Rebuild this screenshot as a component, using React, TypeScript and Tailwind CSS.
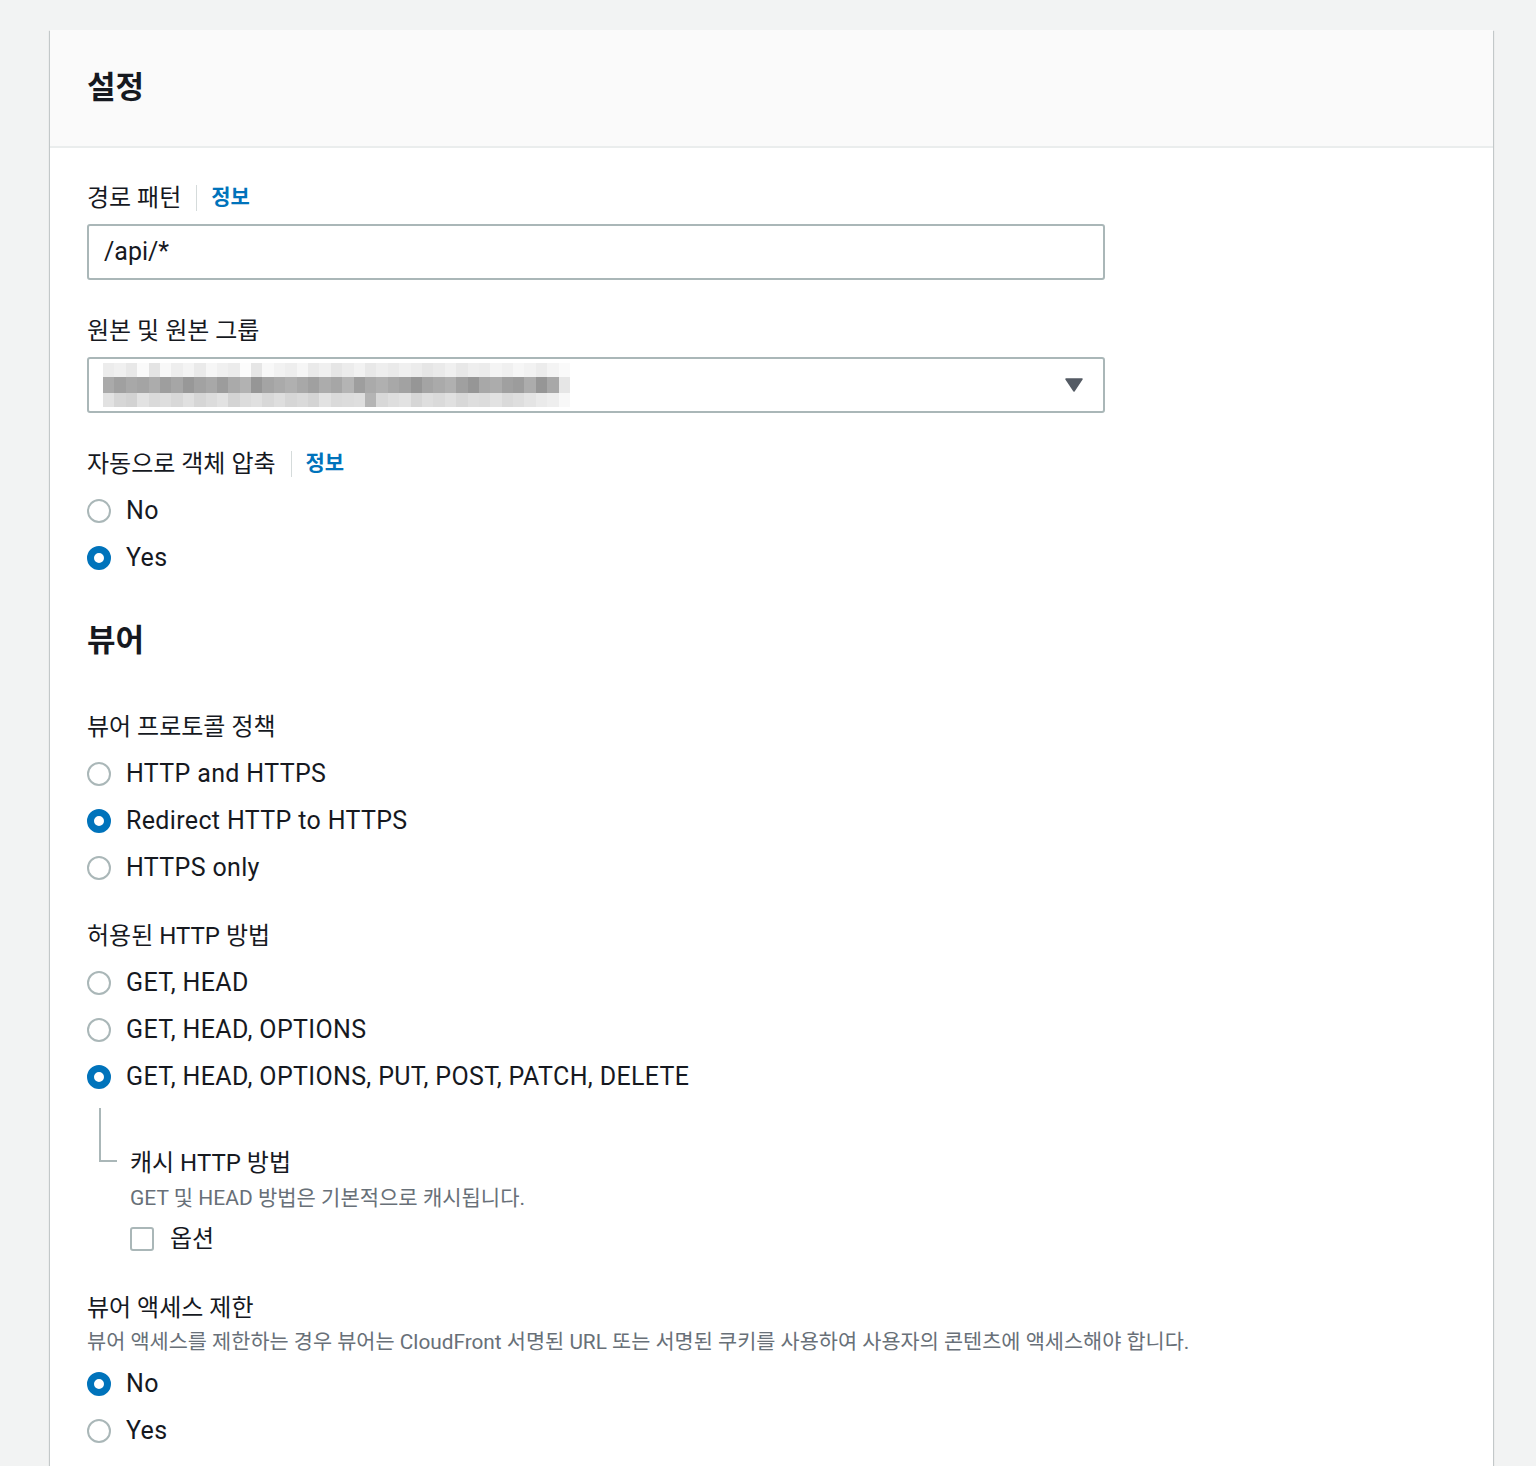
import React from "react";

const FONT = {
  fontFamily: '"Roboto", "Noto Sans CJK KR", sans-serif',
};

// pixelated placeholder rows for the selected origin value
const BLUR_ROWS: number[][] = [
  [236, 240, 232, 250, 228, 248, 238, 244, 234, 246, 240, 236, 252, 230, 248, 242, 238, 246, 234, 240, 230, 236, 242, 232, 238, 234, 240, 236, 230, 234, 240, 232, 238, 236, 244, 240, 246, 242, 236, 244, 250],
  [170, 160, 168, 164, 172, 158, 166, 152, 162, 168, 156, 170, 178, 150, 164, 170, 176, 168, 160, 172, 166, 180, 158, 170, 176, 168, 162, 150, 164, 170, 176, 160, 150, 168, 172, 160, 156, 172, 150, 168, 230],
  [226, 214, 210, 226, 218, 222, 216, 224, 214, 220, 226, 212, 220, 224, 216, 222, 214, 218, 212, 226, 218, 220, 222, 180, 216, 222, 226, 214, 222, 218, 224, 216, 222, 220, 226, 218, 222, 228, 234, 238, 248],
];

function Radio({ label, checked }: { label: string; checked?: boolean }) {
  return (
    <div className="flex h-[47px] items-center">
      {checked ? (
        <span className="box-border h-6 w-6 shrink-0 rounded-full border-[7px] border-[#0073bb] bg-white" />
      ) : (
        <span className="box-border h-6 w-6 shrink-0 rounded-full border-2 border-[#aab7b8] bg-white" />
      )}
      <span className="ml-[15px] text-[25px] tracking-[0.35px] text-[#16191f]">{label}</span>
    </div>
  );
}

function FieldLabel({ text, info }: { text: string; info?: boolean }) {
  return (
    <div className="flex h-8 items-center text-[24px] text-[#16191f]">
      <span>{text}</span>
      {info && (
        <>
          <span className="ml-[15px] mr-[14px] h-[26px] w-px bg-[#d5dbdb]" />
          <span className="text-[21px] font-bold text-[#0073bb]">정보</span>
        </>
      )}
    </div>
  );
}

export default function App() {
  return (
    <div className="min-h-[1466px] bg-[#f2f3f3] pl-[50px] pr-[43px] pt-[30px]" style={FONT}>
      <div className="bg-white shadow-[0_1px_1px_0_rgba(0,28,36,0.3),1px_1px_1px_0_rgba(0,28,36,0.15),-1px_1px_1px_0_rgba(0,28,36,0.15)]">
        {/* card header */}
        <div className="flex h-[118px] items-center border-b-2 border-[#eaeded] bg-[#fafafa] px-[37px]">
          <h2 className="text-[31px] font-bold text-[#16191f]">설정</h2>
        </div>

        <div className="px-[37px] pb-4 pt-[34px]">
          <FieldLabel text="경로 패턴" info />
          <div className="mt-[10px] flex h-14 w-[1018px] items-center rounded-[3px] border-2 border-[#aab7b8] px-[15px] text-[25px] text-[#16191f]">
            /api/*
          </div>

          <div className="mt-[35px]">
            <FieldLabel text="원본 및 원본 그룹" />
          </div>
          <div className="mt-[10px] flex h-14 w-[1018px] items-center justify-between rounded-[3px] border-2 border-[#aab7b8] pl-[14px] pr-[20px]">
            <div className="flex flex-col">
              {BLUR_ROWS.map((row, r) => (
                <div key={r} className={`flex ${r === 1 ? "h-4" : "h-[14px]"}`}>
                  {row.map((v, i) => (
                    <span
                      key={i}
                      className="h-full w-[11.4px]"
                      style={{ backgroundColor: `rgb(${v},${v},${v})` }}
                    />
                  ))}
                </div>
              ))}
            </div>
            <svg width="18" height="14" viewBox="0 0 18 14">
              <path d="M1 1 L17 1 L9 13 Z" fill="#545b64" stroke="#545b64" strokeWidth="1.5" strokeLinejoin="round" />
            </svg>
          </div>

          <div className="mt-[35px]">
            <FieldLabel text="자동으로 객체 압축" info />
          </div>
          <div className="mt-[7px]">
            <Radio label="No" />
            <Radio label="Yes" checked />
          </div>

          <h2 className="mt-10 flex h-10 items-center text-[31px] font-bold text-[#16191f]">뷰어</h2>

          <div className="mt-[50px]">
            <FieldLabel text="뷰어 프로토콜 정책" />
          </div>
          <div className="mt-[7px]">
            <Radio label="HTTP and HTTPS" />
            <Radio label="Redirect HTTP to HTTPS" checked />
            <Radio label="HTTPS only" />
          </div>

          <div className="mt-[29px]">
            <FieldLabel text="허용된 HTTP 방법" />
          </div>
          <div className="mt-[7px]">
            <Radio label="GET, HEAD" />
            <Radio label="GET, HEAD, OPTIONS" />
            <Radio label="GET, HEAD, OPTIONS, PUT, POST, PATCH, DELETE" checked />
          </div>

          {/* nested cache option with tree connector */}
          <div className="flex pl-[12px]">
            <div className="mt-[8px] h-[54px] w-[18px] border-b-2 border-l-2 border-[#aab7b8]" />
            <div className="ml-[13px] pt-[47px]">
              <div className="flex h-8 items-center text-[24px] text-[#16191f]">캐시 HTTP 방법</div>
              <div className="mt-[6px] flex h-7 items-center text-[21px] text-[#687078]">
                GET 및 HEAD 방법은 기본적으로 캐시됩니다.
              </div>
              <div className="mt-[10px] flex h-8 items-center">
                <span className="box-border h-6 w-6 rounded-[3px] border-2 border-[#aab7b8]" />
                <span className="ml-4 text-[24px] text-[#16191f]">옵션</span>
              </div>
            </div>
          </div>

          <div className="mt-[37px]">
            <FieldLabel text="뷰어 액세스 제한" />
          </div>
          <div className="mt-[5px] flex h-7 items-center text-[20.8px] text-[#687078]">
            뷰어 액세스를 제한하는 경우 뷰어는 CloudFront 서명된 URL 또는 서명된 쿠키를 사용하여 사용자의 콘텐츠에 액세스해야 합니다.
          </div>
          <div className="mt-[3px]">
            <Radio label="No" checked />
            <Radio label="Yes" />
          </div>
        </div>
      </div>
    </div>
  );
}
